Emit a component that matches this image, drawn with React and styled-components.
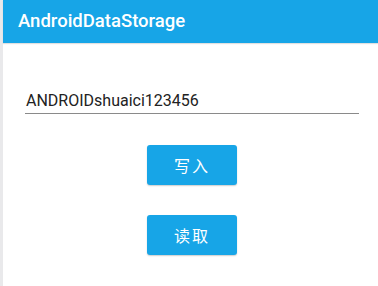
import React from "react";
import styled, { createGlobalStyle } from "styled-components";

const Global = createGlobalStyle`
  html, body { margin: 0; padding: 0; background: #fff; }
  body { font-family: Roboto, "Noto Sans CJK SC", sans-serif; }
`;

const Screen = styled.div`
  width: 378px;
  height: 286px;
  display: flex;
  background: #fff;
  overflow: hidden;
`;

const Edge = styled.div`
  width: 3px;
  flex: none;
  background: #e9e9eb;
`;

const Main = styled.div`
  flex: 1;
  display: flex;
  flex-direction: column;
`;

const AppBar = styled.div`
  height: 43px;
  flex: none;
  background: #17a5e7;
  display: flex;
  align-items: center;
  padding-left: 15px;
  padding-bottom: 2px;
  box-sizing: border-box;
  box-shadow: 0 1px 1px rgba(0, 0, 0, 0.12);
  color: #fff;
  font-size: 18.5px;
  font-weight: 500;
`;

const Content = styled.div`
  display: flex;
  flex-direction: column;
  align-items: center;
  padding: 0 19px 0 22px;
`;

const Field = styled.div`
  align-self: stretch;
  margin-top: 48px;
  height: 22px;
  border-bottom: 1px solid #8a8a8a;
  font-size: 16px;
  color: #222;
  display: flex;
  align-items: flex-start;
  padding-left: 1px;
`;

const Button = styled.div`
  width: 90px;
  height: 40px;
  margin-top: ${(p) => p.$top}px;
  border-radius: 3px;
  background: #17a5e7;
  box-shadow: 0 1px 1.5px rgba(0, 0, 0, 0.2);
  color: #fff;
  font-size: 16px;
  display: flex;
  align-items: center;
  justify-content: center;
  letter-spacing: 2px;
`;

export default function App() {
  return (
    <>
      <Global />
      <Screen>
        <Edge />
        <Main>
          <AppBar>AndroidDataStorage</AppBar>
          <Content>
            <Field>ANDROIDshuaici123456</Field>
            <Button $top={31}>写入</Button>
            <Button $top={30}>读取</Button>
          </Content>
        </Main>
      </Screen>
    </>
  );
}
